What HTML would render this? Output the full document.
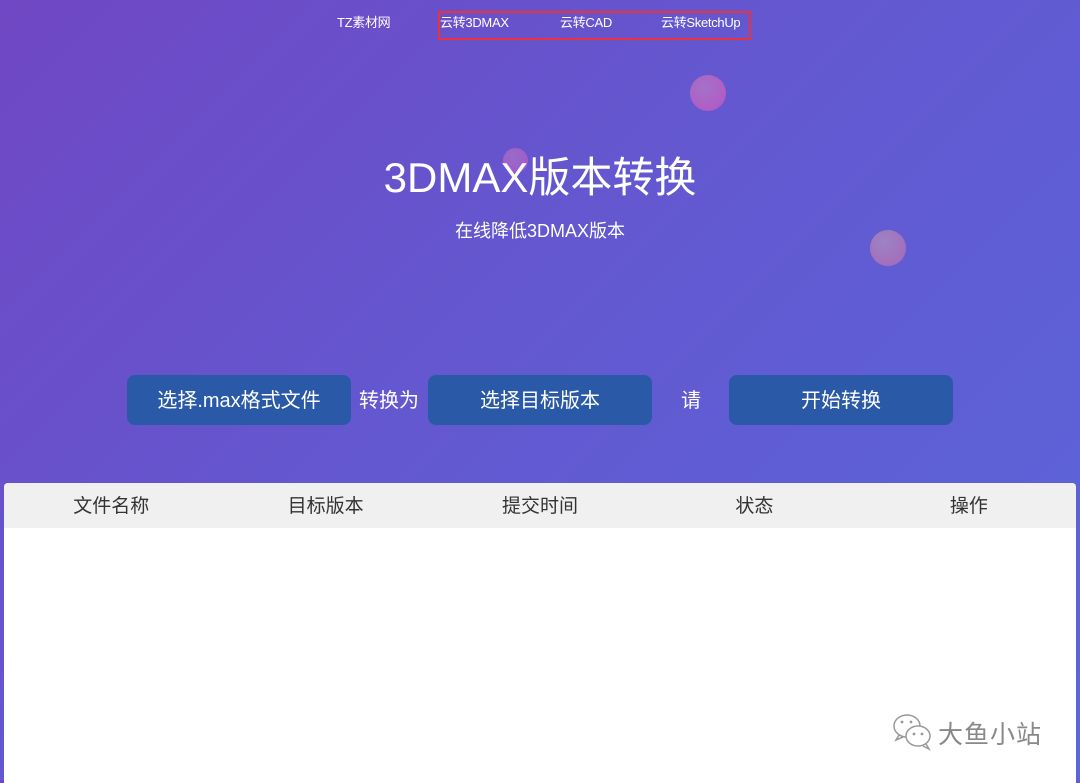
<!DOCTYPE html>
<html><head><meta charset="utf-8"><style>
*{margin:0;padding:0;box-sizing:border-box}
body{width:1080px;height:780px;overflow:hidden;position:relative;font-family:"Liberation Sans","Noto Sans CJK SC",sans-serif;background:linear-gradient(135deg,#7047c4 0%,#6358d0 45%,#5b66da 100%)}
.nav{position:absolute;top:12px;font-size:13px;color:#fff;letter-spacing:-0.3px}
.box{position:absolute;left:438px;top:11px;width:313px;height:29px;border:2px solid #e8323c}
.ball{position:absolute;border-radius:50%;background:radial-gradient(circle at 40% 35%,#a472c8,#b554c4)}
h1{position:absolute;top:144px;left:0;width:1080px;text-align:center;color:#fff;font-weight:normal;font-size:42px}
.sub{position:absolute;top:217px;width:1080px;text-align:center;color:#fff;font-size:18px}
.btn{position:absolute;top:375px;height:50px;width:224px;background:#2a5aa7;border-radius:8px;color:#fff;font-size:20px;text-align:center;line-height:52px}
.lbl{position:absolute;top:375px;line-height:52px;color:#fff;font-size:20px}
.tbl{position:absolute;left:4px;top:483px;width:1072px;height:300px;background:#fff;border-radius:4px 4px 0 0;overflow:hidden}
.th{height:45px;background:#f0f0f0;display:flex}
.th div{flex:1;text-align:center;line-height:48px;font-size:19px;color:#333}
.wm{position:absolute;left:893px;top:715px;color:#888;font-size:25px;letter-spacing:1px}
</style></head><body>
<div class="nav" style="left:337px">TZ素材网</div>
<div class="nav" style="left:440px">云转3DMAX</div>
<div class="nav" style="left:560px">云转CAD</div>
<div class="nav" style="left:661px">云转SketchUp</div>
<div class="box"></div>
<div class="ball" style="left:690px;top:75px;width:36px;height:36px"></div>
<div class="ball" style="left:503px;top:148px;width:25px;height:25px;opacity:.8"></div>
<div class="ball" style="left:870px;top:230px;width:36px;height:36px;background:radial-gradient(circle at 40% 35%,#9c84c4,#a865b8)"></div>
<h1>3DMAX版本转换</h1>
<div class="sub">在线降低3DMAX版本</div>
<div class="btn" style="left:127px">选择.max格式文件</div>
<div class="lbl" style="left:359px">转换为</div>
<div class="btn" style="left:428px">选择目标版本</div>
<div class="lbl" style="left:681px">请</div>
<div class="btn" style="left:729px">开始转换</div>
<div class="tbl"><div class="th"><div>文件名称</div><div>目标版本</div><div>提交时间</div><div>状态</div><div>操作</div></div></div>
<svg style="position:absolute;left:891px;top:712px" width="44" height="40" viewBox="0 0 44 40"><g fill="none" stroke="#999" stroke-width="1.5"><ellipse cx="16" cy="14" rx="13" ry="11"/><path d="M8 23l-3 5 7-3"/><ellipse cx="27" cy="24" rx="12" ry="10" fill="#fff"/><path d="M35 32l3 5-6-3"/></g><g fill="#999"><circle cx="11" cy="10" r="1.4"/><circle cx="20" cy="10" r="1.4"/><circle cx="23" cy="22" r="1.4"/><circle cx="31" cy="22" r="1.4"/></g></svg>
<div class="wm" style="left:938px">大鱼小站</div>
</body></html>
